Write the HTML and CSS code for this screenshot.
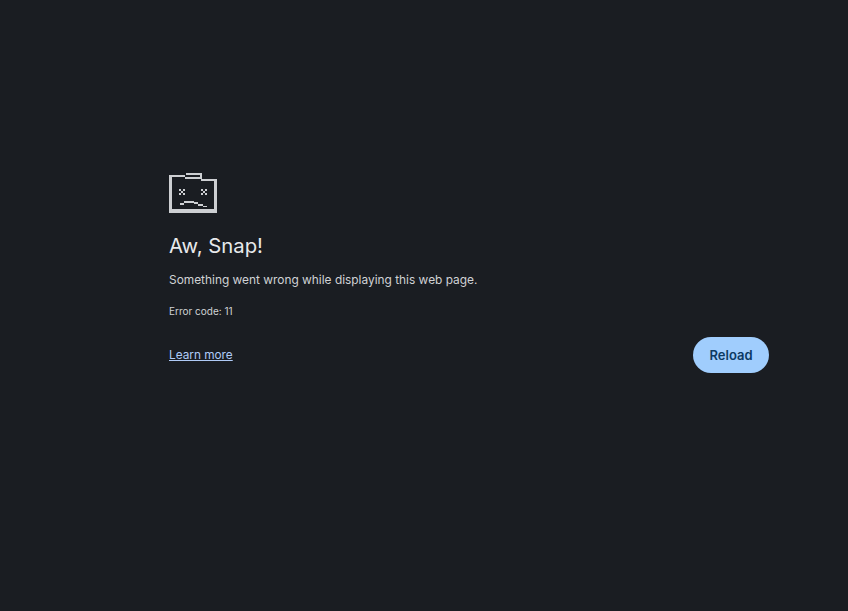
FILE: index.html
```html
<!DOCTYPE html>
<html lang="en">
<head>
<meta charset="UTF-8">
<meta name="viewport" content="width=device-width, initial-scale=1.0">
<title>Aw, Snap!</title>
<link rel="stylesheet" href="styles.css">
</head>
<body>

<div class="wrapper">
  <svg class="sad-tab" width="48" height="40" viewBox="0 0 48 40" shape-rendering="crispEdges" fill="#cdcfd2">
    <!-- folder outline -->
    <rect x="0" y="2" width="3" height="38"/>
    <rect x="0" y="2" width="16" height="2"/>
    <rect x="17" y="0" width="16" height="2"/>
    <rect x="31" y="2" width="2" height="4"/>
    <rect x="16" y="4" width="16" height="2"/>
    <rect x="32" y="6" width="16" height="2"/>
    <rect x="45" y="6" width="3" height="34"/>
    <rect x="0" y="36" width="48" height="4"/>
    <!-- left eye -->
    <rect x="10" y="16" width="2" height="2"/>
    <rect x="14" y="16" width="2" height="2"/>
    <rect x="12" y="18" width="2" height="2"/>
    <rect x="10" y="20" width="2" height="2"/>
    <rect x="14" y="20" width="2" height="2"/>
    <!-- right eye -->
    <rect x="32" y="16" width="2" height="2"/>
    <rect x="36" y="16" width="2" height="2"/>
    <rect x="34" y="18" width="2" height="2"/>
    <rect x="32" y="20" width="2" height="2"/>
    <rect x="36" y="20" width="2" height="2"/>
    <!-- mouth -->
    <rect x="11" y="30" width="4" height="2"/>
    <rect x="15" y="28" width="10" height="2"/>
    <rect x="25" y="29" width="4" height="2"/>
    <rect x="29" y="31" width="5" height="2"/>
    <rect x="34" y="33" width="4" height="1"/>
  </svg>
  <h1 class="title">Aw, Snap!</h1>
  <p class="message">Something went wrong while displaying this web page.</p>
  <p class="error-code">Error code: 11</p>
  <div class="actions">
    <a class="learn-more" href="#">Learn more</a>
    <button class="reload">Reload</button>
  </div>
</div>

</body>
</html>
```

FILE: styles.css
```css
body {
  margin: 0;
  background-color: #1a1d22;
  font-family: Inter, "Noto Sans", sans-serif;
  color: #d0d2d5;
}
.wrapper {
  width: 600px;
  margin-left: 169px;
  padding-top: 173px;
}
.sad-tab {
  display: block;
}
.title {
  margin: 20px 0 0;
  font-size: 20.3px;
  font-weight: 400;
  line-height: 26px;
  color: #e8eaec;
}
.message {
  margin: 11px 0 0;
  font-size: 11.9px;
  line-height: 20px;
}
.error-code {
  margin: 13px 0 0;
  font-size: 10px;
  line-height: 16px;
}
.actions {
  display: flex;
  justify-content: space-between;
  align-items: center;
  margin-top: 18px;
}
.learn-more {
  font-size: 11.8px;
  color: #b0cbf7;
  text-decoration: underline;
}
.reload {
  width: 76px;
  height: 36px;
  padding: 0;
  border: none;
  border-radius: 18px;
  background-color: #a0cdfd;
  color: #0c3a63;
  font-family: inherit;
  font-size: 13px;
  font-weight: 600;
}
```
